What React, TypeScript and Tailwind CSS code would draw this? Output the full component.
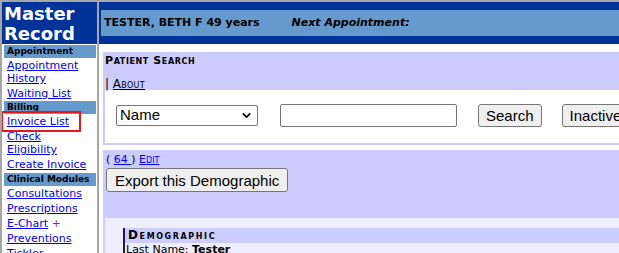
import { ChevronDown } from "lucide-react";

const navLink = "block text-[#0000ee] underline text-[11px] leading-[13px] py-[1px] pl-[5px] pr-[2px]";
const navBar = "bg-[#6699cc] h-[13px] ml-[2px] mr-[1px] pl-[3px] text-[9px] leading-[13px] font-bold text-black whitespace-nowrap";
const btn = "h-[23px] px-[7px] bg-[#efefef] border border-[#767676] rounded-[3px] text-[15px] leading-[21px] text-black font-['Liberation_Sans',Arial,sans-serif] whitespace-nowrap";

function SideNav() {
  return (
    <aside className="relative w-[95px] shrink-0 flex flex-col">
      <div className="bg-[#003399] h-[42px] pl-[2px] pt-[2px] text-white font-bold text-[18px] leading-[20px]">
        Master
        <br />
        Record
      </div>
      <div className="mt-[1px] flex flex-col">
        <div className={navBar}>Appointment</div>
        <a className={navLink}>
          Appointment
          <br />
          History
        </a>
        <a className={navLink}>Waiting List</a>
        <div className={navBar}>Billing</div>
        <a className={navLink}>Invoice List</a>
        <a className={navLink}>
          Check
          <br />
          Eligibility
        </a>
        <a className={navLink}>Create Invoice</a>
        <div className={navBar + " mt-[1px]"}>Clinical Modules</div>
        <a className={navLink}>Consultations</a>
        <a className={navLink}>Prescriptions</a>
        <div className="text-[11px] leading-[13px] py-[1px] pl-[5px]">
          <a className="text-[#0000ee] underline">E-Chart</a>{" "}
          <span className="text-[#993366]">+</span>
        </div>
        <a className={navLink}>Preventions</a>
        <a className={navLink}>Tickler</a>
      </div>
      {/* highlight box */}
      <div className="absolute left-[-1px] top-[109px] w-[80px] h-[21px] border-2 border-[#e5191c]" />
    </aside>
  );
}

function SearchPanel() {
  return (
    <div className="w-[620px] border-2 border-[#ccccff]">
      <div className="bg-[#ccccff] h-[36px] text-[11px] leading-[14px] text-black">
        <div className="font-bold [font-variant-caps:small-caps] tracking-[0.6px]">Patient Search</div>
        <div className="mt-[9px] text-[12px] leading-[14px]">
          | <span className="underline [font-variant-caps:small-caps] tracking-[0.3px]">About</span>
        </div>
      </div>
      <div className="bg-white h-[53px] pt-[13px] pl-[11px] flex items-start gap-[22px]">
        <div className="mt-[2px] w-[142px] h-[21px] border border-[#767676] rounded-[2px] flex items-center justify-between pl-[3px] pr-[4px] text-[15px] font-['Liberation_Sans',Arial,sans-serif] text-black">
          <span>Name</span>
          <ChevronDown className="w-[13px] h-[13px]" strokeWidth={3} />
        </div>
        <div className="mt-[1px] w-[177px] h-[23px] border border-[#767676] rounded-[2px] bg-white" />
        <div className="mt-[1px] flex gap-[20px] ml-[-1px]">
          <button className={btn}>Search</button>
          <button className={btn}>Inactive</button>
        </div>
      </div>
    </div>
  );
}

function DemographicPanel() {
  return (
    <div className="mt-[5px] w-[620px] bg-[#ccccff] pt-[3px]">
      <div className="pl-[3px] text-[11px] leading-[14px] text-black">
        ({" "}
        <a className="text-[#0000ee] underline">64 </a>){" "}
        <a className="text-[#0000ee] underline [font-variant-caps:small-caps]">Edit</a>
      </div>
      <button className={btn + " ml-[3px] mt-[1px] h-[24px] px-[8px]"}>Export this Demographic</button>
      <div className="mt-[25px] ml-[2px] bg-[#eeeeff] pt-[10px] pl-[18px] h-[40px]">
        <div className="border-l-2 border-[#1a1a4d]">
          <div className="bg-[#ccccff] h-[15px] pl-[3px] text-[12px] leading-[15px] font-bold [font-variant-caps:small-caps] tracking-[1.6px] text-black">
            Demographic
          </div>
          <div className="pl-[1px] text-[11px] leading-[14px] text-black">
            Last Name: <b>Tester</b>
          </div>
        </div>
      </div>
    </div>
  );
}

export default function App() {
  return (
    <div className="w-[619px] h-[253px] overflow-hidden bg-white flex border-t-2 border-l-2 border-[#a6a6a6] font-['DejaVu_Sans',Verdana,sans-serif]">
      <SideNav />
      <div className="w-[2px] shrink-0 bg-[#a6a6a6]" />
      <main className="flex-1 min-w-0 overflow-hidden">
        <div className="bg-[#003399] py-[8px] pl-[2px]">
          <div className="bg-[#6699cc] h-[26px] pl-[3px] flex items-center whitespace-nowrap text-black font-bold">
            <span className="text-[11px]">TESTER, BETH F 49 years</span>
            <span className="ml-[32px] text-[11px] italic">Next Appointment:</span>
          </div>
        </div>
        <div className="pt-[8px] pl-[4px]">
          <SearchPanel />
          <DemographicPanel />
        </div>
      </main>
    </div>
  );
}
